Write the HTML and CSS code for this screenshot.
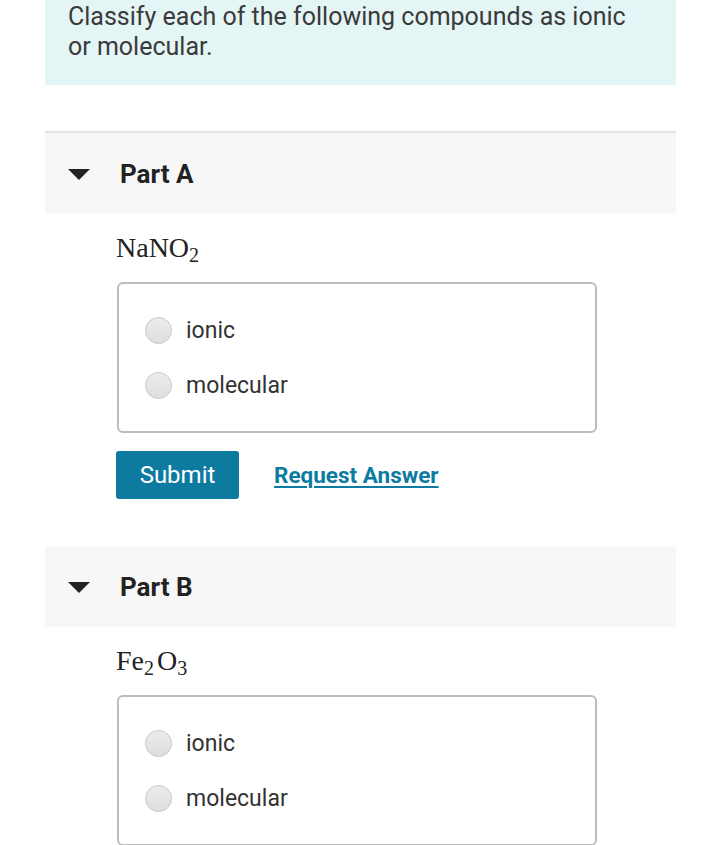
FILE: index.html
```html
<!DOCTYPE html>
<html lang="en">
<head>
<meta charset="utf-8">
<title>Classify compounds</title>
<link rel="stylesheet" href="styles.css">
</head>
<body>
<main class="page">
  <div class="intro">
    <p>Classify each of the following compounds as ionic or molecular.</p>
  </div>

  <section class="part part-first">
    <div class="part-header">
      <svg class="caret" width="22" height="11" viewBox="0 0 22 11"><polygon points="0,0 22,0 11,11" fill="#222"/></svg>
      <h2>Part A</h2>
    </div>
    <div class="part-body">
      <div class="formula">NaNO<sub>2</sub></div>
      <div class="choices">
        <label class="choice"><span class="radio"></span><span>ionic</span></label>
        <label class="choice"><span class="radio"></span><span>molecular</span></label>
      </div>
      <div class="actions">
        <button class="submit">Submit</button>
        <a class="request" href="#">Request Answer</a>
      </div>
    </div>
  </section>

  <section class="part part-second">
    <div class="part-header">
      <svg class="caret" width="22" height="11" viewBox="0 0 22 11"><polygon points="0,0 22,0 11,11" fill="#222"/></svg>
      <h2>Part B</h2>
    </div>
    <div class="part-body">
      <div class="formula">Fe<sub>2</sub><span class="thin"></span>O<sub>3</sub></div>
      <div class="choices">
        <label class="choice"><span class="radio"></span><span>ionic</span></label>
        <label class="choice"><span class="radio"></span><span>molecular</span></label>
      </div>
    </div>
  </section>
</main>
</body>
</html>
```
FILE: styles.css
```css
html, body {
  margin: 0;
  padding: 0;
  background: #fff;
}
body {
  font-family: Roboto, "Liberation Sans", sans-serif;
  color: #333;
}
.page {
  margin: 0 44px 0 45px;
  display: flex;
  flex-direction: column;
}
.intro {
  background: #e4f5f5;
  padding: 2px 40px 23px 23px;
}
.intro p {
  margin: 0;
  font-size: 25px;
  line-height: 30px;
  color: #3a3a3a;
}
.part-first {
  margin-top: 46px;
  border-top: 2px solid #e4e4e4;
}
.part-second {
  margin-top: 47px;
}
.part-header {
  height: 81px;
  background: #f7f7f7;
  display: flex;
  align-items: center;
  padding-left: 23px;
  gap: 30px;
}
.caret {
  display: block;
  margin-top: 2px;
}
.part-header h2 {
  margin: 0;
  font-size: 26px;
  font-weight: 700;
  color: #222;
  line-height: 30px;
}
.part-body {
  padding-left: 71px;
  display: flex;
  flex-direction: column;
  align-items: flex-start;
}
.formula {
  margin-top: 18px;
  font-family: "Liberation Serif", "DejaVu Serif", serif;
  font-size: 28px;
  line-height: 31px;
  color: #222;
}
.formula sub {
  font-size: 20px;
  vertical-align: -5px;
  line-height: 0;
}
.formula .thin {
  display: inline-block;
  width: 3px;
}
.choices {
  margin-top: 19px;
  margin-left: 1px;
  width: 480px;
  box-sizing: border-box;
  border: 2px solid #bcbcbc;
  border-radius: 6px;
  padding: 33px 0 32px 26px;
  display: flex;
  flex-direction: column;
  gap: 28px;
}
.choice {
  display: flex;
  align-items: center;
  gap: 14px;
  height: 27px;
  font-size: 23px;
  color: #333;
}
.radio {
  width: 25px;
  height: 25px;
  border-radius: 50%;
  border: 1px solid #c6c6c6;
  background: linear-gradient(#ececec, #dedede);
  flex: none;
}
.actions {
  margin-top: 18px;
  display: flex;
  align-items: center;
  gap: 35px;
}
.submit {
  width: 123px;
  height: 48px;
  border: none;
  border-radius: 3px;
  background: #0d7ba0;
  color: #fff;
  font-family: Roboto, "Liberation Sans", sans-serif;
  font-size: 24px;
  padding: 0;
}
.request {
  font-size: 22.5px;
  font-weight: 700;
  color: #0d7ba0;
  text-decoration: underline;
  text-underline-offset: 3px;
  text-decoration-thickness: 2px;
}
```
